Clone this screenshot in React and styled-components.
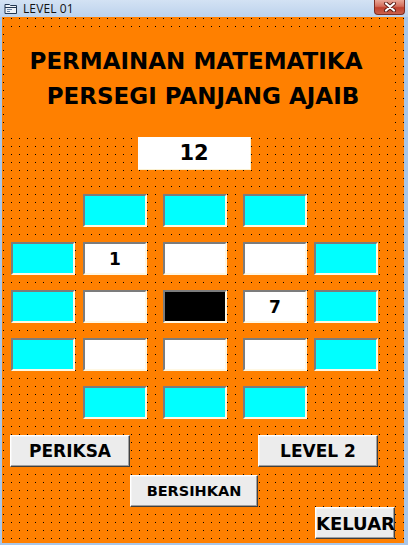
import React from "react";
import styled, { createGlobalStyle } from "styled-components";

const Global = createGlobalStyle`
  html, body { margin: 0; padding: 0; background: #fff; }
  * { box-sizing: border-box; }
`;

const ORANGE = "#ff8000";
const GAME_FONT = `"Comic Sans MS", "DejaVu Sans", sans-serif`;

const Window = styled.div`
  width: 408px;
  height: 545px;
  display: flex;
  flex-direction: column;
  background: #a9c6e8;
  overflow: hidden;
`;

const TitleBar = styled.div`
  height: 17px;
  flex: none;
  display: flex;
  align-items: center;
  padding-left: 4px;
  gap: 5px;
  background: linear-gradient(#d3e2f4, #bcd2ec);
`;

const TitleText = styled.span`
  font: 12px/17px "Open Sans", "Noto Sans", sans-serif;
  color: #111;
  letter-spacing: 0.1px;
`;

const CloseButton = styled.div`
  margin-left: auto;
  margin-right: 3px;
  align-self: flex-start;
  width: 31px;
  height: 15px;
  border: 1px solid #7d2d22;
  border-top: none;
  border-radius: 0 0 4px 4px;
  background: linear-gradient(#e9a797 0%, #d36e5c 45%, #c0412e 55%, #c9604a 100%);
  display: flex;
  align-items: center;
  justify-content: center;
`;

const Body = styled.div`
  flex: 1;
  margin: 0 4px 2px 2px;
  background-color: #000;
  background-image: linear-gradient(to right, transparent 1px, ${ORANGE} 1px),
    linear-gradient(to bottom, transparent 1px, ${ORANGE} 1px);
  background-size: 8px 8px, 8px 8px;
  background-position: 1px 1px, 1px 1px;
  display: flex;
  flex-direction: column;
  align-items: flex-start;
`;

const Heading = styled.h1`
  margin: 17px 0 0 9px;
  width: 384px;
  height: 100px;
  padding-top: 10px;
  background: ${ORANGE};
  font: bold 23px/35px ${GAME_FONT};
  color: #000;
  text-align: center;
`;

const HeadingLine = styled.span`
  display: block;
  padding-right: ${(p) => p.$pullLeft || 0}px;
`;

const Target = styled.div`
  margin: 3px 0 0 136px;
  width: 113px;
  height: 33px;
  background: #fff;
  border-right: 1px solid #fbf1d2;
  border-bottom: 1px solid #fbf1d2;
  display: flex;
  align-items: center;
  justify-content: center;
  font: bold 21px ${GAME_FONT};
  color: #000;
`;

const Board = styled.div`
  margin: 24px 0 0 9px;
  display: grid;
  grid-template-columns: 72px 80px 80px 71px 64px;
  grid-auto-rows: 33px;
  row-gap: 15px;
`;

const Cell = styled.div`
  grid-column: ${(p) => p.$col};
  width: 64px;
  height: 33px;
  border: 2px solid;
  border-color: #7c7c7c #fff8e4 #fff8e4 #7c7c7c;
  background: ${(p) =>
    p.$kind === "cyan" ? "#00ffff" : p.$kind === "black" ? "#000" : "#fff"};
  display: flex;
  align-items: center;
  justify-content: center;
  font: bold 17px ${GAME_FONT};
  color: #000;
`;

const Controls = styled.div`
  margin: 16px 0 0 8px;
  display: grid;
  grid-template-columns: 120px 128px 57px 63px 17px;
  grid-template-rows: 40px 32px 32px;
  align-items: start;
`;

const Button = styled.button`
  grid-column: ${(p) => p.$col};
  grid-row: ${(p) => p.$row};
  height: 32px;
  padding: 0;
  border: 1px solid;
  border-color: #ffffff #404040 #404040 #ffffff;
  box-shadow: inset -1px -1px 0 #a0a0a0, inset 1px 1px 0 #f4f4f4;
  background: #ececec;
  font: bold ${(p) => p.$size || 16}px ${GAME_FONT};
  color: #000;
  cursor: pointer;
`;

const board = [
  [null, "cyan", "cyan", "cyan", null],
  ["cyan", "1", "white", "white", "cyan"],
  ["cyan", "white", "black", "7", "cyan"],
  ["cyan", "white", "white", "white", "cyan"],
  [null, "cyan", "cyan", "cyan", null],
];

function WindowIcon() {
  return (
    <svg width="14" height="12" viewBox="0 0 14 12">
      <path d="M1 1.5 H5.5 L6.5 2.5 H12.5 V10.5 H1 Z" fill="#eef3f9" stroke="#22364f" strokeWidth="1" />
      <path d="M1 4.5 H12.5" stroke="#22364f" strokeWidth="1" />
      <path d="M3 6.5 H8 M3 8.5 H6" stroke="#6d86a6" strokeWidth="1" />
    </svg>
  );
}

function CloseGlyph() {
  return (
    <svg width="14" height="10" viewBox="0 0 14 10">
      <path d="M3 1.5 L11 8.5 M11 1.5 L3 8.5" stroke="#5a1c14" strokeWidth="4" strokeLinecap="round" />
      <path d="M3 1.5 L11 8.5 M11 1.5 L3 8.5" stroke="#ffffff" strokeWidth="2.2" strokeLinecap="round" />
    </svg>
  );
}

export default function App() {
  return (
    <>
      <Global />
      <Window>
        <TitleBar>
          <WindowIcon />
          <TitleText>LEVEL 01</TitleText>
          <CloseButton>
            <CloseGlyph />
          </CloseButton>
        </TitleBar>
        <Body>
          <Heading>
            <HeadingLine $pullLeft={14}>PERMAINAN MATEMATIKA</HeadingLine>
            <HeadingLine>PERSEGI PANJANG AJAIB</HeadingLine>
          </Heading>
          <Target>12</Target>
          <Board>
            {board.map((row, r) =>
              row.map((c, i) =>
                c === null ? null : (
                  <Cell
                    key={`${r}-${i}`}
                    $col={i + 1}
                    $kind={c === "1" || c === "7" ? "white" : c}
                  >
                    {c === "1" || c === "7" ? c : ""}
                  </Cell>
                )
              )
            )}
          </Board>
          <Controls>
            <Button $col="1" $row="1" $size={17}>PERIKSA</Button>
            <Button $col="3 / 5" $row="1" $size={17}>LEVEL 2</Button>
            <Button $col="2" $row="2" $size={14.5}>BERSIHKAN</Button>
            <Button $col="4 / 6" $row="3" $size={18}>KELUAR</Button>
          </Controls>
        </Body>
      </Window>
    </>
  );
}
